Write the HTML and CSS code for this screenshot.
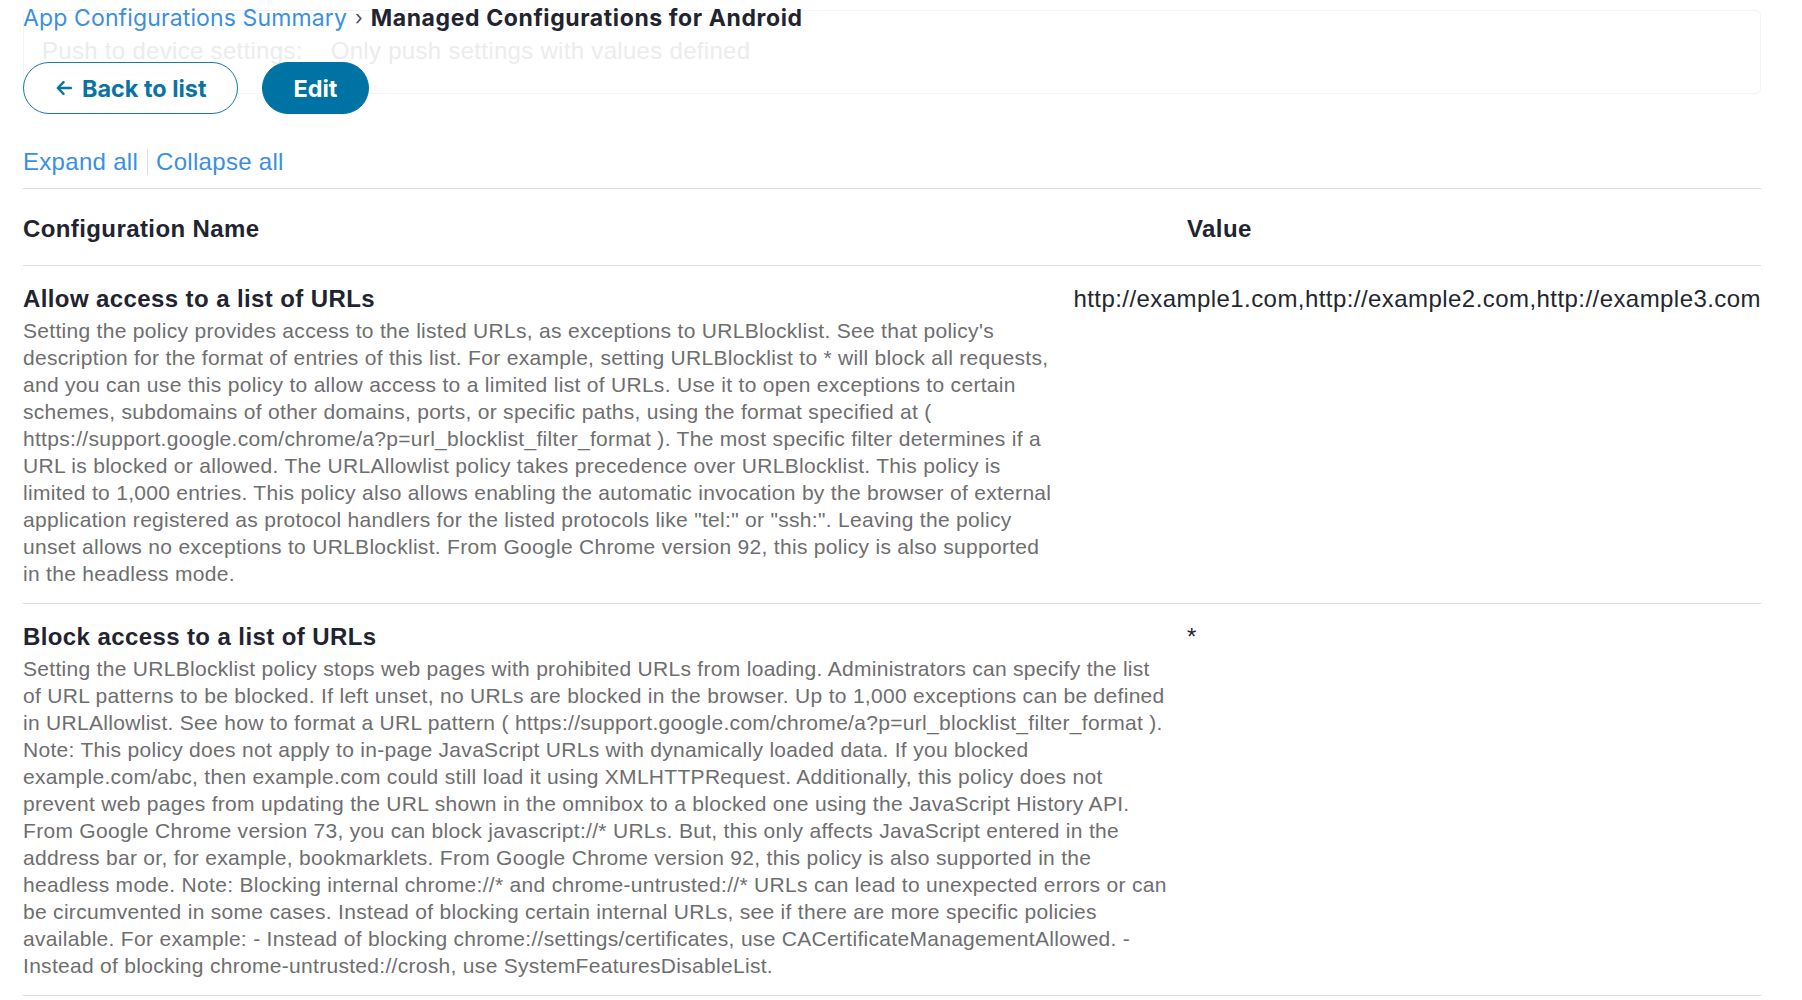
FILE: index.html
```html
<!DOCTYPE html>
<html lang="en">
<head>
<meta charset="utf-8">
<title>Managed Configurations for Android</title>
<link rel="stylesheet" href="styles.css">
</head>
<body>
<div class="page">
  <div class="ghost-panel">
    <span class="ghost-label">Push to device settings:</span>
    <span class="ghost-value">Only push settings with values defined</span>
  </div>

  <nav class="breadcrumb">
    <a class="crumb-link" href="#">App Configurations Summary</a>
    <span class="crumb-sep">›</span>
    <span class="crumb-current">Managed Configurations for Android</span>
  </nav>

  <div class="actions">
    <button class="btn btn-outline" type="button">
      <svg class="btn-icon" width="16" height="16" viewBox="0 0 16 16" aria-hidden="true">
        <path d="M15 8H2M7.5 2.2L1.8 8l5.7 5.8" fill="none" stroke="currentColor" stroke-width="2.4" stroke-linecap="round" stroke-linejoin="round"/>
      </svg>
      <span>Back to list</span>
    </button>
    <button class="btn btn-primary" type="button">Edit</button>
  </div>

  <div class="toggles">
    <a href="#" class="toggle-link">Expand all</a>
    <span class="toggle-sep"></span>
    <a href="#" class="toggle-link">Collapse all</a>
  </div>

  <div class="config-list">
    <div class="config-row config-head">
      <div class="col-name">Configuration Name</div>
      <div class="col-value">Value</div>
    </div>

    <div class="config-row">
      <div class="col-name">
        <div class="config-title">Allow access to a list of URLs</div>
        <div class="config-desc">Setting the policy provides access to the listed URLs, as exceptions to URLBlocklist. See that policy's description for the format of entries of this list. For example, setting URLBlocklist to * will block all requests, and you can use this policy to allow access to a limited list of URLs. Use it to open exceptions to certain schemes, subdomains of other domains, ports, or specific paths, using the format specified at ( https://support.google.com/chrome/a?p=url_blocklist_filter_format ). The most specific filter determines if a URL is blocked or allowed. The URLAllowlist policy takes precedence over URLBlocklist. This policy is limited to 1,000 entries. This policy also allows enabling the automatic invocation by the browser of external application registered as protocol handlers for the listed protocols like "tel:" or "ssh:". Leaving the policy unset allows no exceptions to URLBlocklist. From Google Chrome version 92, this policy is also supported in the headless mode.</div>
      </div>
      <div class="col-value config-value">http://example1.com,http://example2.com,http://example3.com</div>
    </div>

    <div class="config-row">
      <div class="col-name">
        <div class="config-title">Block access to a list of URLs</div>
        <div class="config-desc">Setting the URLBlocklist policy stops web pages with prohibited URLs from loading. Administrators can specify the list of URL patterns to be blocked. If left unset, no URLs are blocked in the browser. Up to 1,000 exceptions can be defined in URLAllowlist. See how to format a URL pattern ( https://support.google.com/chrome/a?p=url_blocklist_filter_format ). Note: This policy does not apply to in-page JavaScript URLs with dynamically loaded data. If you blocked example.com/abc, then example.com could still load it using XMLHTTPRequest. Additionally, this policy does not prevent web pages from updating the URL shown in the omnibox to a blocked one using the JavaScript History API. From Google Chrome version 73, you can block javascript://* URLs. But, this only affects JavaScript entered in the address bar or, for example, bookmarklets. From Google Chrome version 92, this policy is also supported in the headless mode. Note: Blocking internal chrome://* and chrome-untrusted://* URLs can lead to unexpected errors or can be circumvented in some cases. Instead of blocking certain internal URLs, see if there are more specific policies available. For example: - Instead of blocking chrome://settings/certificates, use CACertificateManagementAllowed. - Instead of blocking chrome-untrusted://crosh, use SystemFeaturesDisableList.</div>
      </div>
      <div class="col-value config-value">*</div>
    </div>
  </div>
</div>
</body>
</html>
```

FILE: styles.css
```css
* {
  box-sizing: border-box;
}

html, body {
  margin: 0;
  padding: 0;
  background: #ffffff;
}

body {
  font-family: "Liberation Sans", Arial, sans-serif;
  color: #1f2430;
  overflow: hidden;
}

.page {
  position: relative;
  margin-left: 23px;
  width: 1738px;
  padding-top: 3px;
}

.ghost-panel {
  position: absolute;
  top: 10px;
  left: 0;
  width: 1738px;
  height: 84px;
  border: 1px solid #f4f4f4;
  border-radius: 5px;
  padding: 25px 0 0 18px;
  font-size: 24px;
  line-height: 30px;
  color: #ececec;
  letter-spacing: 0.3px;
  display: flex;
  gap: 28px;
  z-index: 0;
}

.breadcrumb {
  position: relative;
  z-index: 1;
  font-family: Inter, "Liberation Sans", sans-serif;
  font-size: 23px;
  line-height: 30px;
  display: flex;
  align-items: center;
  white-space: nowrap;
}

.crumb-link {
  color: #3b8fe3;
  text-decoration: none;
  letter-spacing: 0.13px;
}

.crumb-sep {
  color: #4a4f5a;
  margin: 0 8px;
  font-size: 20px;
}

.crumb-current {
  font-weight: 700;
  color: #1f2430;
  letter-spacing: 0.6px;
}

.actions {
  position: relative;
  z-index: 1;
  display: flex;
  gap: 24px;
  margin-top: 29px;
}

.btn {
  height: 52px;
  border-radius: 26px;
  font-family: Inter, "Liberation Sans", sans-serif;
  font-size: 23.4px;
  font-weight: 700;
  display: inline-flex;
  align-items: center;
  justify-content: center;
  padding: 0 31px;
  cursor: pointer;
}

.btn-outline {
  background: #ffffff;
  border: 1px solid #1b78a3;
  color: #0a73a3;
  padding: 0 30px 0 32px;
  gap: 10px;
}

.btn-icon {
  display: block;
}

.btn-primary {
  background: #0073a5;
  border: 1px solid #0073a5;
  color: #ffffff;
}

.toggles {
  display: flex;
  align-items: center;
  margin-top: 33px;
  font-size: 24px;
  line-height: 30px;
  letter-spacing: 0.3px;
}

.toggle-link {
  color: #3b8fe3;
  text-decoration: none;
}

.toggle-sep {
  width: 1px;
  height: 26px;
  background: #dedede;
  margin: 0 8px 0 9px;
}

.config-list {
  margin-top: 11px;
  border-top: 1px solid #dcdce0;
}

.config-row {
  display: flex;
  gap: 20px;
  border-bottom: 1px solid #dcdce0;
  padding: 18px 0 16px;
}

.config-head {
  padding: 25px 0 21px;
  font-weight: 700;
  font-size: 24px;
  line-height: 30px;
  letter-spacing: 0.4px;
  color: #1f2430;
}

.col-name {
  flex: 1 1 0;
  min-width: 0;
}

.col-value {
  flex: 0 0 auto;
  min-width: 574px;
}

.config-title {
  font-size: 24px;
  line-height: 30px;
  font-weight: 700;
  letter-spacing: 0.4px;
  color: #1f2430;
  margin-bottom: 3px;
}

.config-desc {
  font-size: 21px;
  line-height: 27px;
  letter-spacing: 0.3px;
  color: #6e6e70;
}

.config-value {
  font-size: 24px;
  line-height: 30px;
  letter-spacing: 0.44px;
  color: #222630;
  white-space: nowrap;
}
```
